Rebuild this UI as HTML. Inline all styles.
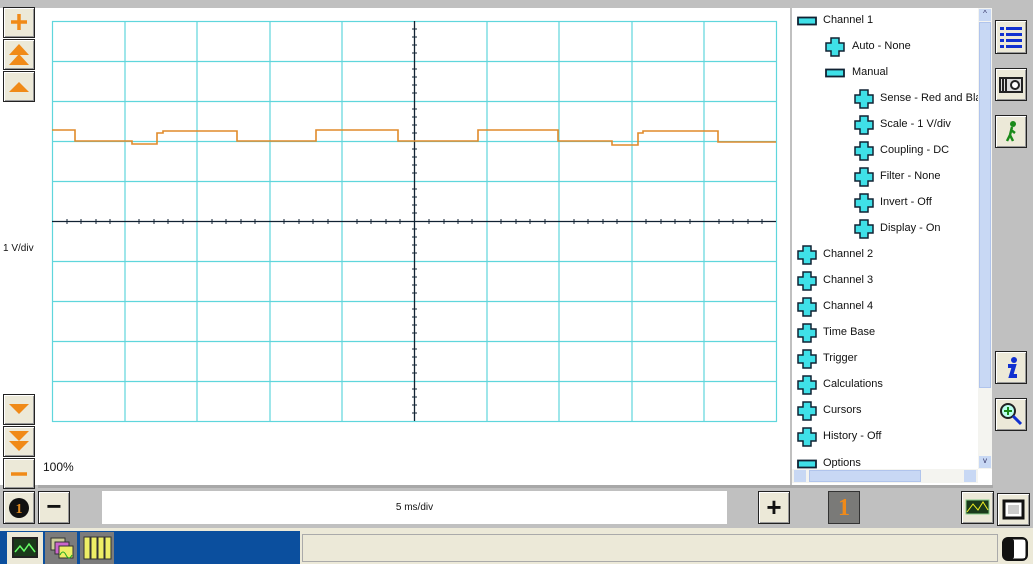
<!DOCTYPE html>
<html><head><style>
*{margin:0;padding:0;box-sizing:border-box}
body{width:1033px;height:564px;background:#c0c0c0;position:relative;overflow:hidden;font-family:"Liberation Sans",sans-serif;font-size:11px;color:#111}
.a{position:absolute}
.btn{position:absolute;background:#ece9d8;border:1px solid #222;box-shadow:inset 1px 1px 0 #fff,inset -1px -1px 0 #999}
.tree div{position:absolute;white-space:nowrap}
</style></head><body>
<div class="a" style="left:0;top:8px;width:38px;height:477px;background:#fff"></div>
<div class="a" style="left:3px;top:243px;font-size:10px">1 V/div</div>
<div class="btn" style="left:3px;top:7px;width:32px;height:31px"><svg width="30" height="29"><path d="M15 6v16M7 14h16" stroke="#f08a18" stroke-width="3.5"/></svg></div>
<div class="btn" style="left:3px;top:39px;width:32px;height:31px"><svg width="30" height="29"><path d="M5 15L15 4L25 15ZM5 25L15 14L25 25Z" fill="#f08a18"/></svg></div>
<div class="btn" style="left:3px;top:71px;width:32px;height:31px"><svg width="30" height="29"><path d="M5 20L15 10L25 20Z" fill="#f08a18"/></svg></div>
<div class="btn" style="left:3px;top:394px;width:32px;height:31px"><svg width="30" height="29"><path d="M5 9L15 19L25 9Z" fill="#f08a18"/></svg></div>
<div class="btn" style="left:3px;top:426px;width:32px;height:31px"><svg width="30" height="29"><path d="M5 4L15 14L25 4ZM5 14L15 24L25 14Z" fill="#f08a18"/></svg></div>
<div class="btn" style="left:3px;top:458px;width:32px;height:31px"><svg width="30" height="29"><path d="M7 15h16" stroke="#f08a18" stroke-width="3.5"/></svg></div>
<div class="btn" style="left:3px;top:491px;width:32px;height:33px"><svg width="30" height="31"><circle cx="15" cy="16" r="10" fill="#111"/><text x="15" y="21" font-size="14" font-weight="bold" fill="#e08a20" text-anchor="middle" font-family="Liberation Serif">1</text></svg></div>

<div class="a" style="left:38px;top:8px;width:752px;height:477px;background:#fff"></div>
<svg class="a" style="left:0;top:0" width="790" height="485">
<g stroke="#5fd6dc" stroke-width="1.2" fill="none">
<rect x="52.5" y="21.5" width="724" height="400"/>
<path d="M125 21v400M197 21v400M270 21v400M342 21v400M487 21v400M559 21v400M632 21v400M704 21v400M52 61.5h724M52 101.5h724M52 141.5h724M52 181.5h724M52 261.5h724M52 301.5h724M52 341.5h724M52 381.5h724"/>
</g>
<path d="M414.5 21v400M52 221.5h724" stroke="#123" stroke-width="1.3"/>
<path d="M412 29h5M412 37h5M412 45h5M412 53h5M412 69h5M412 77h5M412 85h5M412 93h5M412 109h5M412 117h5M412 125h5M412 133h5M412 149h5M412 157h5M412 165h5M412 173h5M412 189h5M412 197h5M412 205h5M412 213h5M412 229h5M412 237h5M412 245h5M412 253h5M412 269h5M412 277h5M412 285h5M412 293h5M412 309h5M412 317h5M412 325h5M412 333h5M412 349h5M412 357h5M412 365h5M412 373h5M412 389h5M412 397h5M412 405h5M412 413h5" stroke="#123"/>
<path d="M67 219v5M81 219v5M96 219v5M110 219v5M139 219v5M154 219v5M168 219v5M183 219v5M212 219v5M226 219v5M241 219v5M255 219v5M284 219v5M299 219v5M313 219v5M328 219v5M357 219v5M371 219v5M386 219v5M400 219v5M429 219v5M444 219v5M458 219v5M472 219v5M501 219v5M516 219v5M530 219v5M545 219v5M574 219v5M588 219v5M603 219v5M617 219v5M646 219v5M661 219v5M675 219v5M690 219v5M719 219v5M733 219v5M748 219v5M762 219v5" stroke="#123"/>
<path d="M52 130H75V141H132V144H157V133H163V131H237V141H316V130H398V141H478V130H558V141H612V145H638V133H643V131H718V142H776" stroke="#e08a2a" stroke-width="1.6" fill="none"/>
</svg>
<div class="a" style="left:43px;top:460px;font-size:12px">100%</div>

<div class="a" style="left:792px;top:8px;width:200px;height:477px;background:#fff"></div>
<div class="a" style="left:978px;top:8px;width:14px;height:461px;background:#f4f4f0"></div>
<div class="a" style="left:979px;top:22px;width:12px;height:366px;background:#c8d8f4;border:1px solid #b0c4ec"></div>
<div class="a" style="left:979px;top:9px;width:12px;height:12px;background:#c8d8f4;font-size:8px;text-align:center;color:#336">^</div>
<div class="a" style="left:979px;top:456px;width:12px;height:12px;background:#c8d8f4;font-size:8px;text-align:center;color:#336">v</div>
<div class="a" style="left:792px;top:469px;width:186px;height:14px;background:#f4f4f0"></div>
<div class="a" style="left:809px;top:470px;width:112px;height:12px;background:#c8d8f4;border:1px solid #b0c4ec"></div>
<div class="a" style="left:794px;top:470px;width:12px;height:12px;background:#c8d8f4"></div>
<div class="a" style="left:964px;top:470px;width:12px;height:12px;background:#c8d8f4"></div>

<svg class="a" style="left:0;top:0" width="1033" height="485">
<defs>
<g id="p"><path d="M-4 -9h8v5h5v8h-5v5h-8v-5h-5v-8h5Z" fill="#3fe0e8" stroke="#123" stroke-width="1.5"/></g>
<g id="m"><rect x="-9" y="-3.5" width="18" height="7" fill="#3fe0e8" stroke="#123" stroke-width="1.8"/></g>
</defs>
<use href="#m" x="807" y="21"/><use href="#p" x="835" y="47"/><use href="#m" x="835" y="73"/>
<use href="#p" x="864" y="99"/><use href="#p" x="864" y="125"/><use href="#p" x="864" y="151"/><use href="#p" x="864" y="177"/><use href="#p" x="864" y="203"/><use href="#p" x="864" y="229"/>
<use href="#p" x="807" y="255"/><use href="#p" x="807" y="281"/><use href="#p" x="807" y="307"/><use href="#p" x="807" y="333"/><use href="#p" x="807" y="359"/><use href="#p" x="807" y="385"/><use href="#p" x="807" y="411"/><use href="#p" x="807" y="437"/><use href="#m" x="807" y="464"/>
</svg>
<div class="tree" style="position:absolute;left:0;top:0;width:978px;height:468px;overflow:hidden">
<div style="left:823px;top:14px">Channel 1</div>
<div style="left:852px;top:40px">Auto - None</div>
<div style="left:852px;top:66px">Manual</div>
<div style="left:880px;top:92px">Sense - Red and Black</div>
<div style="left:880px;top:118px">Scale - 1 V/div</div>
<div style="left:880px;top:144px">Coupling - DC</div>
<div style="left:880px;top:170px">Filter - None</div>
<div style="left:880px;top:196px">Invert - Off</div>
<div style="left:880px;top:222px">Display - On</div>
<div style="left:823px;top:248px">Channel 2</div>
<div style="left:823px;top:274px">Channel 3</div>
<div style="left:823px;top:300px">Channel 4</div>
<div style="left:823px;top:326px">Time Base</div>
<div style="left:823px;top:352px">Trigger</div>
<div style="left:823px;top:378px">Calculations</div>
<div style="left:823px;top:404px">Cursors</div>
<div style="left:823px;top:430px">History - Off</div>
<div style="left:823px;top:457px">Options</div>
</div>

<div class="btn" style="left:995px;top:20px;width:32px;height:34px"><svg width="30" height="32"><g fill="#1030d0"><rect x="4" y="6" width="4" height="3"/><rect x="10" y="6" width="16" height="3"/><rect x="4" y="12" width="4" height="3"/><rect x="10" y="12" width="16" height="3"/><rect x="4" y="18" width="4" height="3"/><rect x="10" y="18" width="16" height="3"/><rect x="4" y="24" width="4" height="3"/><rect x="10" y="24" width="16" height="3"/></g></svg></div>
<div class="btn" style="left:995px;top:68px;width:32px;height:33px"><svg width="30" height="31"><rect x="4" y="9" width="22" height="14" fill="#ddd" stroke="#222" stroke-width="2"/><circle cx="19" cy="16" r="4" fill="#fff" stroke="#222" stroke-width="2"/><path d="M7 10v12M10 10v12" stroke="#222" stroke-width="2"/></svg></div>
<div class="btn" style="left:995px;top:115px;width:32px;height:33px"><svg width="30" height="31"><circle cx="17" cy="8" r="3" fill="#1a8a1a"/><path d="M16 11l-2 8l-3 6M14 19l3 6M15 14l4 3" stroke="#1a8a1a" stroke-width="2.5" fill="none"/></svg></div>
<div class="btn" style="left:995px;top:351px;width:32px;height:33px"><svg width="30" height="31"><circle cx="18" cy="8" r="3" fill="#1030d0"/><path d="M12 14h6l-3 10h6" stroke="#1030d0" stroke-width="4" fill="none"/></svg></div>
<div class="btn" style="left:995px;top:398px;width:32px;height:33px"><svg width="30" height="31"><circle cx="12" cy="12" r="7" fill="#bfe" stroke="#222" stroke-width="2"/><path d="M12 8v8M8 12h8" stroke="#1a8a1a" stroke-width="2"/><path d="M17 17l8 8" stroke="#1030d0" stroke-width="3"/></svg></div>

<div class="a" style="left:38px;top:485px;width:955px;height:3px;background:#a8a8a8"></div>
<div class="btn" style="left:38px;top:491px;width:32px;height:33px;font-size:26px;font-weight:bold;text-align:center;line-height:28px">−</div>
<div class="a" style="left:102px;top:491px;width:625px;height:33px;background:#fff;text-align:center;line-height:33px;font-size:10px">5 ms/div</div>
<div class="btn" style="left:758px;top:491px;width:32px;height:33px;font-size:26px;font-weight:bold;text-align:center;line-height:30px">+</div>
<div class="a" style="left:828px;top:491px;width:32px;height:33px;background:#7a7a78;border:1px solid #333;color:#f08a18;font-size:24px;font-weight:bold;font-family:'Liberation Serif';text-align:center;line-height:32px">1</div>
<div class="btn" style="left:961px;top:491px;width:33px;height:33px"><svg width="31" height="31"><rect x="4" y="8" width="23" height="14" fill="#1a3a1a" stroke="#8c8" stroke-width="1"/><path d="M5 20l6-8l5 6l5-8l5 8" stroke="#ee2" fill="none"/></svg></div>
<div class="btn" style="left:997px;top:493px;width:33px;height:33px"><svg width="31" height="31"><rect x="6" y="7" width="19" height="17" fill="#fff" stroke="#111" stroke-width="3"/><rect x="10" y="11" width="11" height="9" fill="#ccc"/></svg></div>

<div class="a" style="left:0;top:528px;width:1033px;height:36px;background:#ece9d8"></div>
<div class="a" style="left:0;top:531px;width:300px;height:33px;background:#0b4f9e"></div>
<div class="a" style="left:7px;top:532px;width:36px;height:32px;background:#ece9d8"></div>
<svg class="a" style="left:12px;top:537px" width="26" height="22"><rect x="1" y="1" width="24" height="19" fill="#1a3a1a" stroke="#222" stroke-width="2"/><path d="M3 15l5-6l4 5l5-7l6 8" stroke="#6f6" fill="none" stroke-width="1.5"/></svg>
<div class="a" style="left:45px;top:532px;width:32px;height:32px;background:#7c7c7c"></div>
<svg class="a" style="left:48px;top:535px" width="28" height="26"><rect x="3" y="3" width="14" height="12" fill="#cc9" stroke="#333"/><rect x="7" y="7" width="14" height="12" fill="#c6c" stroke="#333"/><rect x="11" y="11" width="14" height="12" fill="#ee6" stroke="#333"/><path d="M12 20q3-6 6 0t6 0" stroke="#2a2" fill="none"/></svg>
<div class="a" style="left:80px;top:532px;width:34px;height:32px;background:#7c7c7c"></div>
<svg class="a" style="left:82px;top:535px" width="30" height="26"><g fill="#ee6" stroke="#333"><rect x="2" y="2" width="6" height="22"/><rect x="9" y="2" width="6" height="22"/><rect x="16" y="2" width="6" height="22"/><rect x="23" y="2" width="6" height="22"/></g></svg>
<div class="a" style="left:302px;top:534px;width:696px;height:28px;border:1px solid #aaa;background:#ece9d8"></div>
<svg class="a" style="left:1001px;top:536px" width="28" height="26"><rect x="2" y="2" width="24" height="22" rx="5" fill="#888" stroke="#111" stroke-width="2"/><rect x="2" y="2" width="11" height="22" rx="4" fill="#111"/><rect x="13" y="4" width="11" height="18" fill="#fff"/></svg>
</body></html>
